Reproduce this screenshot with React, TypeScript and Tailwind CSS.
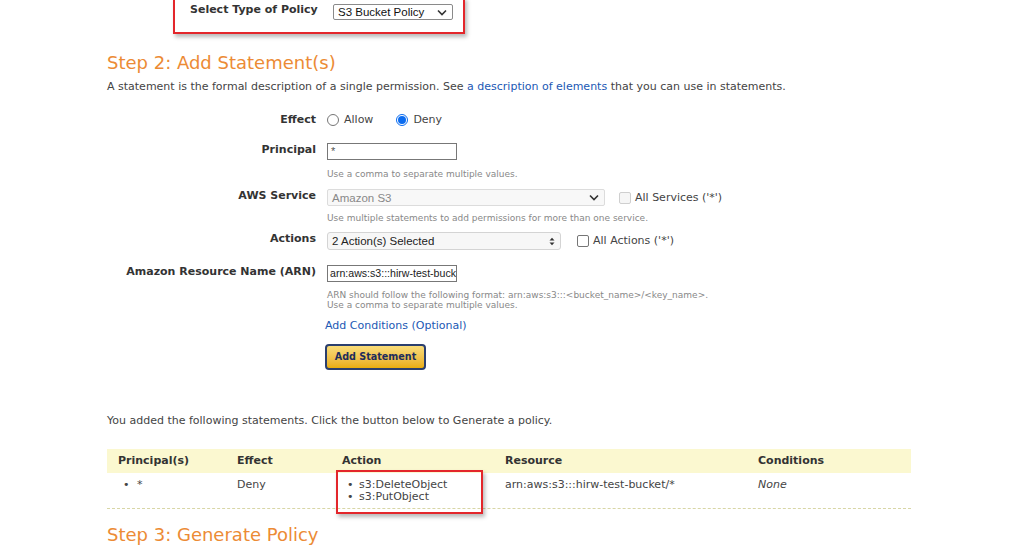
import React from "react";

const body = "font-['DejaVu_Sans',Verdana,sans-serif]";
const arial = "font-['Liberation_Sans',Arial,sans-serif]";

function Chevron() {
  return (
    <svg width="10" height="7" viewBox="0 0 10 7" className="block shrink-0">
      <path d="M1 1.5 L5 5.5 L9 1.5" fill="none" stroke="#333" strokeWidth="1.6" />
    </svg>
  );
}

function UpDown() {
  return (
    <svg width="6" height="9" viewBox="0 0 6 9" className="block shrink-0">
      <path d="M0.5 3.5 L3 0.8 L5.5 3.5 Z" fill="#333" />
      <path d="M0.5 5.5 L3 8.2 L5.5 5.5 Z" fill="#333" />
    </svg>
  );
}

function Radio({ checked }: { checked?: boolean }) {
  return checked ? (
    <span className="flex h-[12px] w-[12px] shrink-0 items-center justify-center rounded-full border border-[#0b6cf0] bg-white">
      <span className="block h-[8px] w-[8px] rounded-full bg-[#0b6cf0]" />
    </span>
  ) : (
    <span className="block h-[12px] w-[12px] shrink-0 rounded-full border border-[#767676] bg-white" />
  );
}

function Checkbox({ disabled, className = "" }: { disabled?: boolean; className?: string }) {
  return (
    <span
      className={
        "block h-[12px] w-[12px] shrink-0 rounded-[2px] border " +
        (disabled ? "border-[#cfcfcf] bg-[#f6f6f6] " : "border-[#767676] bg-white ") +
        className
      }
    />
  );
}

function Label({ children }: { children: React.ReactNode }) {
  return (
    <div className="w-[220px] shrink-0 whitespace-nowrap pr-[11px] text-right font-bold text-[#333]">{children}</div>
  );
}

function Help({ children, className = "" }: { children: React.ReactNode; className?: string }) {
  return <div className={"whitespace-nowrap text-[9px] leading-[10px] text-[#888] " + className}>{children}</div>;
}

export default function App() {
  return (
    <div
      className={`${body} h-[548px] w-[1024px] overflow-hidden bg-white pl-[107px] text-[11px] leading-[14px] text-[#444]`}
    >
      {/* policy type picker */}
      <div className="ml-[66px] mt-[-3px] flex h-[37px] w-[292px] items-start border-2 border-[#e3262b] pl-[15px] pt-[4px] shadow-[2px_3px_4px_rgba(0,0,0,0.28)]">
        <div className="w-[132px] whitespace-nowrap font-bold text-[#333]">Select Type of Policy</div>
        <div
          className={`${arial} ml-[11px] mt-[1px] flex h-[16px] w-[120px] items-center justify-between rounded-[2px] border border-[#8a8a8a] bg-white pl-[4px] pr-[5px] text-[11.5px] text-[#111]`}
        >
          <span>S3 Bucket Policy</span>
          <Chevron />
        </div>
      </div>

      <h2 className="mt-[18px] text-[18px] font-normal leading-[22px] text-[#ec8b35]">Step 2: Add Statement(s)</h2>
      <p className="mt-[6px]">
        A statement is the formal description of a single permission. See{" "}
        <span className="text-[#2158b4]">a description of elements</span> that you can use in statements.
      </p>

      {/* statement form */}
      <div className="mt-[18px] flex h-[16px] items-center">
        <Label>Effect</Label>
        <div className="flex items-center">
          <Radio />
          <span className="ml-[5px]">Allow</span>
          <span className="ml-[23px]">
            <Radio checked />
          </span>
          <span className="ml-[5px]">Deny</span>
        </div>
      </div>

      <div className="mt-[15px] flex items-start">
        <Label>Principal</Label>
        <div>
          <div
            className={`${arial} h-[17px] w-[130px] border border-[#777] bg-white pl-[3px] text-[11px] leading-[15px] text-[#555]`}
          >
            *
          </div>
          <Help className="mt-[9px]">Use a comma to separate multiple values.</Help>
        </div>
      </div>

      <div className="mt-[10px] flex items-start">
        <Label>AWS Service</Label>
        <div>
          <div className="flex h-[17px] items-center">
            <div
              className={`${arial} flex h-[17px] w-[278px] items-center justify-between rounded-[2px] border border-[#dcdcdc] bg-[#f8f8f8] pl-[4px] pr-[5px] text-[11.5px] text-[#888]`}
            >
              <span>Amazon S3</span>
              <Chevron />
            </div>
            <Checkbox disabled className="ml-[14px]" />
            <span className="ml-[4px]">All Services ('*')</span>
          </div>
          <Help className="mt-[7px]">Use multiple statements to add permissions for more than one service.</Help>
        </div>
      </div>

      <div className="mt-[9px] flex items-start">
        <Label>Actions</Label>
        <div className="flex h-[18px] items-center">
          <div className="flex h-[18px] w-[234px] items-center justify-between rounded-[3px] border border-[#d4d4d4] bg-[#f7f7f7] pl-[4px] pr-[5px] text-[#222]">
            <span className={`${arial} text-[11.5px]`}>2 Action(s) Selected</span>
            <UpDown />
          </div>
          <Checkbox className="ml-[16px]" />
          <span className="ml-[4px]">All Actions ('*')</span>
        </div>
      </div>

      <div className="mt-[15px] flex items-start">
        <Label>Amazon Resource Name (ARN)</Label>
        <div>
          <div
            className={`${arial} h-[17px] w-[130px] overflow-hidden whitespace-nowrap border border-[#777] bg-white pl-[2px] text-[10.6px] leading-[15px] text-[#222]`}
          >
            arn:aws:s3:::hirw-test-bucket/*
          </div>
          <Help className="mt-[8px]">
            ARN should follow the following format: arn:aws:s3:::&lt;bucket_name&gt;/&lt;key_name&gt;.
            <br />
            Use a comma to separate multiple values.
          </Help>
          <div className="ml-[-2px] mt-[9px] text-[#2158b4]">Add Conditions (Optional)</div>
          <button className="ml-[-2px] mt-[11px] block h-[26px] w-[101px] rounded-[4px] border-2 border-[#2b3f6e] bg-gradient-to-b from-[#f9dc78] to-[#e9ad06] text-[9.6px] font-bold leading-[14px] text-[#1d2d5c]">
            Add Statement
          </button>
        </div>
      </div>

      <p className="mt-[44px]">You added the following statements. Click the button below to Generate a policy.</p>

      {/* statement table */}
      <div className="relative mt-[21px] w-[804px]">
        <div className="flex h-[24px] items-center bg-[#fbf8d0] font-bold text-[#333]">
          <div className="w-[119px] pl-[11px]">Principal(s)</div>
          <div className="w-[105px] pl-[11px]">Effect</div>
          <div className="w-[163px] pl-[11px]">Action</div>
          <div className="w-[253px] pl-[11px]">Resource</div>
          <div className="flex-1 pl-[11px]">Conditions</div>
        </div>
        <div className="flex h-[36px] items-start border-b border-dashed border-[#d8d6a6] pt-[6px] leading-[12px]">
          <div className="flex w-[119px] pl-[16px]">
            <span className="w-[14px]">•</span>
            <span>*</span>
          </div>
          <div className="w-[105px] pl-[11px]">Deny</div>
          <div className="w-[163px] pl-[16px]">
            <div className="flex">
              <span className="w-[12px]">•</span>
              <span>s3:DeleteObject</span>
            </div>
            <div className="flex">
              <span className="w-[12px]">•</span>
              <span>s3:PutObject</span>
            </div>
          </div>
          <div className="w-[253px] pl-[11px]">arn:aws:s3:::hirw-test-bucket/*</div>
          <div className="flex-1 pl-[11px] italic">None</div>
        </div>
        <div className="pointer-events-none absolute left-[229px] top-[21px] h-[44px] w-[147px] border-2 border-[#e3262b] shadow-[2px_3px_4px_rgba(0,0,0,0.28)]" />
      </div>

      <h2 className="mt-[15px] text-[18px] font-normal leading-[22px] text-[#ec8b35]">Step 3: Generate Policy</h2>
    </div>
  );
}
